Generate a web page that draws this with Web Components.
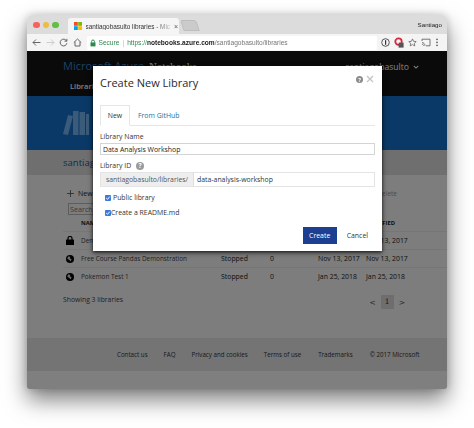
<!DOCTYPE html>
<html>
<head>
<meta charset="utf-8">
<title>Create New Library</title>
<style>
    html, body { margin: 0; height: 100%; background: #fff; overflow: hidden; }
    body { font-family: "Open Sans", "Liberation Sans", sans-serif; }
</style>
</head>
<body>
<browser-window>
    <browser-tabs slot="chrome" title-text="santiagobasulto libraries - Mic" user="Santiago"></browser-tabs>
    <browser-toolbar slot="chrome"></browser-toolbar>

    <nb-header user="santiagobasulto"></nb-header>
    <nb-hero></nb-hero>
    <nb-userbar>santiagobasulto</nb-userbar>
    <library-list>
        <library-row icon="lock" name="Demo" status="Stopped" clones="0" created="Nov 13, 2017" modified="Nov 13, 2017"></library-row>
        <library-row icon="globe" name="Free Course Pandas Demonstration" status="Stopped" clones="0" created="Nov 13, 2017" modified="Nov 13, 2017"></library-row>
        <library-row icon="globe" name="Pokemon Test 1" status="Stopped" clones="0" created="Jan 25, 2018" modified="Jan 25, 2018"></library-row>
    </library-list>
    <nb-footer>
        <span style="margin-left:90px">Contact us</span>
        <span style="margin-left:16px">FAQ</span>
        <span style="margin-left:16px">Privacy and cookies</span>
        <span style="margin-left:16px">Terms of use</span>
        <span style="margin-left:17px">Trademarks</span>
        <span style="margin-left:17px">© 2017 Microsoft</span>
    </nb-footer>

    <library-dialog slot="overlay"></library-dialog>
</browser-window>

<script>
const windowTemplate = `
<style>
    :host { display: block; position: absolute; left: 27px; top: 15px; width: 420px; height: 374px; }
    #frame {
        display: flex;
        flex-direction: column;
        height: 100%;
        border-radius: 5px 5px 2px 2px;
        box-shadow: 0 11px 22px rgba(0, 0, 0, 0.5), 0 0 8px rgba(0, 0, 0, 0.18);
        overflow: hidden;
        filter: blur(0.35px);
    }
    #page { position: relative; flex: 1; display: flex; flex-direction: column; min-height: 0; background: #fff; }
    #backdrop { position: absolute; inset: 0; background: rgba(0, 0, 0, 0.5); }
</style>
<div id="frame">
    <slot name="chrome"></slot>
    <div id="page">
        <slot></slot>
        <div id="backdrop"></div>
        <slot name="overlay"></slot>
    </div>
</div>`;

class BrowserWindow extends HTMLElement {
    constructor () {
        super();
        this.attachShadow({mode: "open"}).innerHTML = windowTemplate;
    }
}

class BrowserTabs extends HTMLElement {
    constructor () {
        super();
        this.attachShadow({mode: "open"});
    }

    connectedCallback () {
        this.shadowRoot.innerHTML = `
        <style>
            :host { display: flex; align-items: flex-end; height: 19px; background: #dcdcdc; font: 6.4px "Liberation Sans", sans-serif; color: #333; }
            .lights { display: flex; gap: 3px; padding: 0 0 6px 6px; }
            .lights i { width: 6.5px; height: 6.5px; border-radius: 50%; }
            .tab { display: flex; align-items: center; gap: 4px; width: 105px; height: 16px; margin-left: 9px; padding-left: 6px; background: #f5f5f5; border-radius: 3px 3px 0 0; white-space: nowrap; }
            .tab b { font-weight: normal; flex: 1; -webkit-mask-image: linear-gradient(90deg, #000 80%, rgba(0, 0, 0, 0.25) 100%); }
            .tab em { font-style: normal; font-size: 7px; color: #555; padding-right: 4px; }
            .newtab { width: 14px; height: 9px; margin: 0 0 3px 3px; background: #cbcbcb; border: 1px solid #bdbdbd; border-radius: 2px 3px 0 0; transform: skewX(18deg); }
            .user { margin-left: auto; padding: 0 5px 6px 0; font-size: 6.2px; color: #222; }
        </style>
        <div class="lights">
            <i style="background:#f8615c"></i><i style="background:#eebc3f"></i><i style="background:#5fc043"></i>
        </div>
        <div class="tab">
            <svg width="8" height="8" viewBox="0 0 8 8" style="flex:none"><rect width="3.8" height="3.8" fill="#f25022"/><rect x="4.2" width="3.8" height="3.8" fill="#7fba00"/><rect y="4.2" width="3.8" height="3.8" fill="#00a4ef"/><rect x="4.2" y="4.2" width="3.8" height="3.8" fill="#ffb900"/></svg>
            <b>${this.getAttribute("title-text")}</b><em>×</em>
        </div>
        <div class="newtab"></div>
        <div class="user">${this.getAttribute("user")}</div>`;
    }
}

class BrowserToolbar extends HTMLElement {
    constructor () {
        super();
        this.attachShadow({mode: "open"}).innerHTML = `
        <style>
            :host { display: flex; align-items: center; height: 17px; background: #f4f4f4; font: 6.6px "Liberation Sans", sans-serif; color: #777; }
            svg { flex: none; display: block; }
            .nav { display: flex; align-items: center; gap: 4.5px; padding-left: 5px; }
            .url { display: flex; align-items: center; flex: none; width: 290px; height: 14px; margin-left: 5px; background: #fff; border-radius: 2px; white-space: nowrap; }
            .secure { color: #2d8a4e; margin: 0 3px 0 2px; }
            .sep { color: #bbb; margin-right: 3px; }
            .https { color: #2d8a4e; }
            .host { color: #222; font-weight: bold; }
            .icons { display: flex; align-items: center; gap: 4px; padding-left: 4px; }
        </style>
        <div class="nav">
            <svg width="9" height="9" viewBox="0 0 9 9" fill="none" stroke="#666" stroke-width="1"><path d="M8.5 4.5H1M4 1.5L1 4.5L4 7.5"/></svg>
            <svg width="9" height="9" viewBox="0 0 9 9" fill="none" stroke="#ccc" stroke-width="1"><path d="M.5 4.5H8M5 1.5L8 4.5L5 7.5"/></svg>
            <svg width="9" height="9" viewBox="0 0 9 9" fill="none" stroke="#666" stroke-width="1"><path d="M7.6 3A3.4 3.4 0 1 0 7.9 5.2M7.9 .8V3.2H5.5"/></svg>
            <svg width="9" height="9" viewBox="0 0 9 9" fill="none" stroke="#666" stroke-width="1"><path d="M.8 4.6L4.5 1L8.2 4.6M2 3.8V8H7V3.8"/></svg>
        </div>
        <div class="url">
            <svg width="8" height="8" viewBox="0 0 8 8" style="margin-left:2px"><rect x="1.5" y="3.4" width="5" height="4" fill="#2d8a4e"/><path d="M2.6 3.6V2.4a1.4 1.4 0 0 1 2.8 0V3.6" fill="none" stroke="#2d8a4e"/></svg>
            <span class="secure">Secure</span><span class="sep">|</span>
            <span class="https">https://</span><span class="host">notebooks.azure.com</span><span>/santiagobasulto/libraries</span>
        </div>
        <div class="icons">
            <svg width="9" height="9" viewBox="0 0 9 9"><circle cx="4.5" cy="4.5" r="3.8" fill="none" stroke="#555"/><rect x="4" y="2.2" width="1.2" height="4.6" fill="#333"/></svg>
            <svg width="10" height="11" viewBox="0 0 10 11"><circle cx="4.5" cy="4.6" r="3.2" fill="none" stroke="#d8283c" stroke-width="1.8"/><rect x="4.6" y="5.6" width="5" height="5" fill="#555"/></svg>
            <svg width="9" height="9" viewBox="0 0 9 9" fill="none" stroke="#666" stroke-width=".8"><path d="M4.5 .9L5.6 3.3L8.2 3.6L6.3 5.3L6.8 7.9L4.5 6.6L2.2 7.9L2.7 5.3L.8 3.6L3.4 3.3Z"/></svg>
            <svg width="10" height="9" viewBox="0 0 10 9" fill="none" stroke="#666" stroke-width=".9"><path d="M1 3V1.2H9V7.8H5"/><path d="M1 4.6C2.6 4.6 4 6 4 7.8M1 6.3C1.9 6.3 2.6 7 2.6 7.8"/></svg>
            <svg width="4" height="9" viewBox="0 0 4 9" fill="#555"><circle cx="2" cy="1.4" r=".8"/><circle cx="2" cy="4.4" r=".8"/><circle cx="2" cy="7.4" r=".8"/></svg>
        </div>`;
    }
}

class NbHeader extends HTMLElement {
    constructor () {
        super();
        this.attachShadow({mode: "open"});
    }

    connectedCallback () {
        this.shadowRoot.innerHTML = `
        <style>
            :host { display: block; flex: none; height: 45px; background: #141414; color: #fff; }
            .brand { display: flex; align-items: baseline; height: 28px; padding: 3px 28px 0 36px; white-space: nowrap; box-sizing: border-box; line-height: 24px; }
            .azure { font-size: 11px; color: #2f86d2; }
            .nb { font: 11px "Liberation Serif", serif; margin-left: 5px; }
            .preview { font: 6.5px "Liberation Serif", serif; margin-left: 5px; }
            .user { margin-left: auto; font-size: 8.6px; color: #fff; display: flex; align-items: center; gap: 4px; }
            nav { padding: 2px 0 0 43px; font-size: 7.5px; font-weight: 600; }
        </style>
        <div class="brand">
            <span class="azure">Microsoft Azure</span><span class="nb">Notebooks</span><span class="preview">Preview</span>
            <span class="user">${this.getAttribute("user")}
                <svg width="6" height="4" viewBox="0 0 7 5" fill="none" stroke="#fff" stroke-width="1.3"><path d="M.7 1L3.5 3.8L6.3 1"/></svg>
            </span>
        </div>
        <nav>Libraries</nav>`;
    }
}

class NbHero extends HTMLElement {
    constructor () {
        super();
        this.attachShadow({mode: "open"}).innerHTML = `
        <style>
            :host { display: flex; align-items: center; flex: none; height: 54px; padding-left: 36px; background: #1572cf; box-sizing: border-box; }
        </style>
        <svg width="26" height="25" viewBox="0 0 26 25" fill="#74b6f2">
            <path d="M5 4L10 5L5 24L0 23Z"/><rect x="10" y="0" width="5.5" height="24"/><rect x="16.5" y="1" width="5.5" height="23"/>
            <rect x="23" y="3" width="3" height="21"/>
        </svg>`;
    }
}

class NbUserbar extends HTMLElement {
    constructor () {
        super();
        this.attachShadow({mode: "open"}).innerHTML = `
        <style>
            :host { display: flex; align-items: center; flex: none; height: 25px; padding-left: 36px; background: #dedede; color: #0f5f9f; font-size: 9.5px; box-sizing: border-box; }
        </style>
        <slot></slot>`;
    }
}

const rowIcons = {
    lock: `<svg width="8" height="9" viewBox="0 0 8 9"><rect y="3.6" width="8" height="5.4" rx=".6" fill="#000"/><path d="M2 4V2.4a2 2 0 0 1 4 0V4" fill="none" stroke="#000" stroke-width="1.2"/></svg>`,
    globe: `<svg width="8" height="8" viewBox="0 0 8 8"><circle cx="4" cy="4" r="4" fill="#000"/><path d="M2 1.4L4.4 1.8L3.8 3.4L5.6 4L4.6 6.6L3.4 5L1.4 3.8Z" fill="#ddd"/></svg>`
};

class LibraryRow extends HTMLElement {
    constructor () {
        super();
        this.attachShadow({mode: "open"});
    }

    connectedCallback () {
        const a = (name) => this.getAttribute(name);
        this.shadowRoot.innerHTML = `
        <style>
            :host { display: grid; grid-template-columns: 18px 140px 49px 48px 48px 41px; align-items: center; height: 18px; border-top: 1px solid #ececec; box-sizing: border-box; font-size: 6.9px; white-space: nowrap; color: #222; }
            .icon { display: flex; padding-left: 3px; }
            .name { color: #444; font-size: 6.4px; }
        </style>
        <div class="icon">${rowIcons[a("icon")]}</div>
        <div class="name">${a("name")}</div>
        <div>${a("status")}</div>
        <div>${a("clones")}</div>
        <div>${a("created")}</div>
        <div>${a("modified")}</div>`;
    }
}

class LibraryList extends HTMLElement {
    constructor () {
        super();
        this.attachShadow({mode: "open"}).innerHTML = `
        <style>
            :host { display: block; flex: 1; padding: 11px 0 0 36px; background: #fafafa; font-size: 6.9px; color: #222; }
            .new { display: flex; align-items: center; gap: 4px; height: 14px; padding-left: 4px; font-size: 7px; }
            .delete { margin-left: auto; margin-right: 50px; color: #999; font-size: 6.5px; }
            .search { width: 100px; height: 12px; margin: 3px 0 0 5px; padding-left: 1px; border: 1px solid #bbb; box-sizing: border-box; font-size: 7.2px; line-height: 10px; color: #777; }
            .head { display: grid; grid-template-columns: 18px 140px 49px 48px 48px 41px; height: 16px; align-items: center; font-size: 5.8px; font-weight: bold; }
            .foot { display: flex; align-items: flex-start; justify-content: space-between; width: 342px; margin-top: 10px; font-size: 6.8px; color: #444; }
            .foot > span { line-height: 10px; }
            .pages { display: flex; align-items: center; gap: 5px; font: 7.5px "DejaVu Serif", serif; color: #555; }
            .pages b { display: block; width: 13px; height: 14px; line-height: 14px; text-align: center; font-weight: normal; background: #dcdcdc; color: #333; font-size: 7.5px; }
        </style>
        <div class="new">
            <svg width="7" height="7" viewBox="0 0 8 8" stroke="#333" stroke-width=".8"><path d="M4 0V8M0 4H8"/></svg>
            <span>New Library</span>
            <span class="delete">Delete</span>
        </div>
        <div class="search">Search</div>
        <div class="head"><span></span><span>NAME</span><span></span><span></span><span></span><span>MODIFIED</span></div>
        <slot></slot>
        <div class="foot">
            <span>Showing 3 libraries</span>
            <div class="pages"><span>&lt;</span><b>1</b><span>&gt;</span></div>
        </div>`;
    }
}

class NbFooter extends HTMLElement {
    constructor () {
        super();
        this.attachShadow({mode: "open"}).innerHTML = `
        <style>
            :host { display: flex; align-items: center; flex: none; height: 33px; margin-bottom: 18px; background: #e8e8e8; color: #333; font-size: 6.2px; white-space: nowrap; }
        </style>
        <slot></slot>`;
    }
}

const dialogTemplate = document.createElement("template");
dialogTemplate.innerHTML = `
<style>
    :host { display: block; position: absolute; left: 66px; top: 15px; width: 289px; height: 185px; padding: 0 7px; box-sizing: border-box; background: #fff; box-shadow: 0 1px 3px rgba(0, 0, 0, 0.7), 0 2px 6px rgba(0, 0, 0, 0.4); color: #333; font-size: 6.9px; }
    .title { display: flex; align-items: center; height: 39px; padding-bottom: 7px; box-sizing: border-box; font-size: 11px; color: #2b2b2b; }
    .actions { display: flex; align-items: center; gap: 3px; margin-left: auto; margin-right: 1px; margin-top: -6px; }
    .tabs { display: flex; align-items: stretch; height: 21px; border-bottom: 1px solid #e6e6e6; box-sizing: border-box; }
    .tabs div { display: flex; align-items: center; }
    .tabs .on { width: 30px; justify-content: center; border: 1px solid #e6e6e6; border-bottom: 1px solid #fff; height: 21px; box-sizing: border-box; }
    .tabs .off { margin-left: 8px; color: #1a6f9f; }
    label { display: flex; align-items: center; gap: 5px; height: 11px; margin-top: 5px; }
    .input { display: flex; align-items: center; height: 10px; border: 1px solid #d4d4d4; padding-left: 2px; margin-top: 1px; color: #222; }
    .group { display: flex; height: 15px; margin-top: 1px; border: 1px solid #e4e4e4; box-sizing: border-box; color: #333; }
    .prefix { display: flex; align-items: center; justify-content: center; width: 92px; background: #eee; border-right: 1px solid #ddd; color: #555; }
    .value { display: flex; align-items: center; padding-left: 3px; }
    .check { display: flex; align-items: center; height: 15px; color: #333; }
    .one { margin-top: 3px; padding-left: 5px; gap: 2px; }
    .two { padding-left: 5px; gap: 0; }
    .buttons { display: flex; align-items: center; margin-top: 7px; padding-right: 7px; justify-content: flex-end; }
    .create { display: flex; align-items: center; justify-content: center; width: 34px; height: 17px; background: #1d3f92; color: #fff; }
    .cancel { margin-left: 10px; color: #333; }
</style>
<div class="title">
    Create New Library
    <span class="actions">
        <svg width="7" height="7" viewBox="0 0 8 8"><circle cx="4" cy="4" r="4" fill="#8a8a8a"/><text x="4" y="6.4" font-size="6.5" font-weight="bold" text-anchor="middle" fill="#fff">?</text></svg>
        <svg width="8" height="8" viewBox="0 0 8 8" stroke="#c4c4c4" stroke-width="1.3"><path d="M1 1L7 7M7 1L1 7"/></svg>
    </span>
</div>
<div class="tabs"><div class="on">New</div><div class="off">From GitHub</div></div>
<label>Library Name</label>
<div class="input">Data Analysis Workshop</div>
<label>Library ID
    <svg width="8" height="8" viewBox="0 0 8 8"><circle cx="4" cy="4" r="4" fill="#9a9a9a"/><text x="4" y="6.4" font-size="6.5" font-weight="bold" text-anchor="middle" fill="#fff">?</text></svg>
</label>
<div class="group"><div class="prefix">santiagobasulto/libraries/</div><div class="value">data-analysis-workshop</div></div>
<div class="check one">
    <svg width="6" height="6" viewBox="0 0 6 6"><rect width="6" height="6" rx="1" fill="#3a7bd5"/><path d="M1.2 3L2.5 4.3L4.8 1.6" fill="none" stroke="#fff"/></svg>
    Public library
</div>
<div class="check two">
    <svg width="6" height="6" viewBox="0 0 6 6"><rect width="6" height="6" rx="1" fill="#3a7bd5"/><path d="M1.2 3L2.5 4.3L4.8 1.6" fill="none" stroke="#fff"/></svg>
    Create a README.md
</div>
<div class="buttons"><div class="create">Create</div><div class="cancel">Cancel</div></div>`;

class LibraryDialog extends HTMLElement {
    constructor () {
        super();
        this.attachShadow({mode: "open"}).appendChild(dialogTemplate.content.cloneNode(true));
    }
}

customElements.define("browser-window", BrowserWindow);
customElements.define("browser-tabs", BrowserTabs);
customElements.define("browser-toolbar", BrowserToolbar);
customElements.define("nb-header", NbHeader);
customElements.define("nb-hero", NbHero);
customElements.define("nb-userbar", NbUserbar);
customElements.define("library-row", LibraryRow);
customElements.define("library-list", LibraryList);
customElements.define("nb-footer", NbFooter);
customElements.define("library-dialog", LibraryDialog);
</script>
</body>
</html>
